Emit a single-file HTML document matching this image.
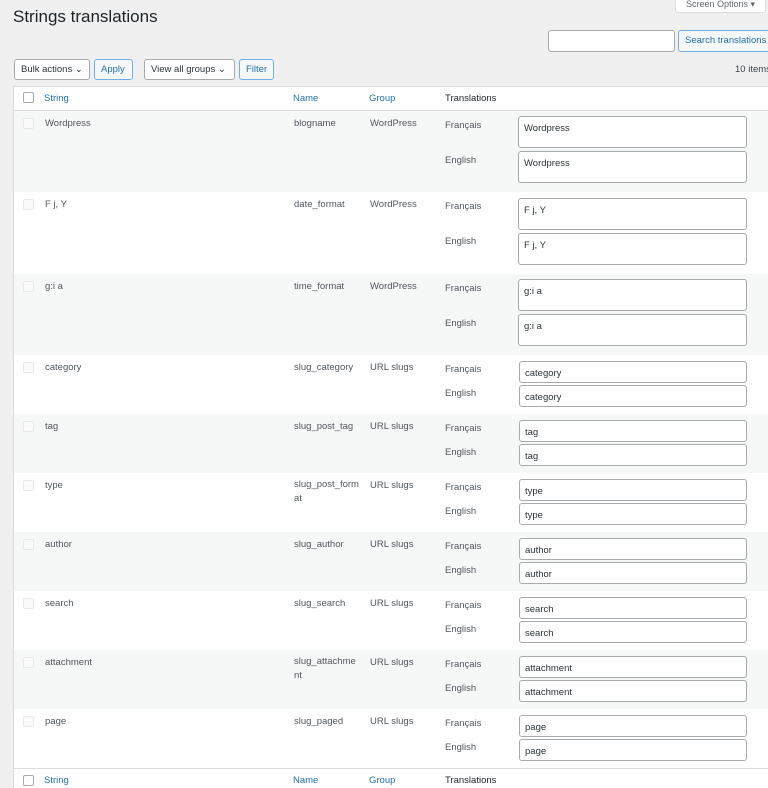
<!DOCTYPE html>
<html><head><meta charset="utf-8"><style>
*{box-sizing:border-box;margin:0;padding:0}
body{width:768px;height:780px;overflow:hidden;background:#f0f0f1;font-family:"Liberation Sans",sans-serif;color:#50575e;position:relative;font-size:9.5px}
.a{position:absolute}
.title{left:13px;top:7px;font-size:17px;color:#1d2327}
.btn{position:absolute;height:21px;border:1px solid #a7aaad;border-radius:3px;background:#fff;font-size:9.5px;line-height:19px;padding:0 6px;color:#2c3338}
.btnb{border-color:#72aee6;color:#2271b1;background:#f6f7f7}
.tbl{position:absolute;left:13px;top:86px;width:760px;height:700px;background:#fff;border:1px solid #dcdcde}
.row{position:absolute;left:13px;width:760px;border-left:1px solid #dcdcde}
.g{background:#f6f7f7}
.cb{position:absolute;left:9px;width:11px;height:11px;border:1px solid #e8e8ea;border-radius:2px;background:#fafafa}
.t{position:absolute;font-size:9.5px;color:#50575e;white-space:nowrap}
.ta{position:absolute;left:504px;width:229px;height:32px;border:1px solid #a7aaad;border-radius:3px;background:#fff;font-size:9.5px;padding:6px 5px;color:#2c3338}
.in{position:absolute;left:505px;width:228px;height:22px;border:1px solid #a7aaad;border-radius:3px;background:#fff;font-size:9.5px;padding:6px 5px 0;color:#2c3338}
.hd{color:#2271b1;font-size:9.5px}
</style></head><body>
<div class="a title">Strings translations</div>
<div class="btn" style="left:675px;top:-6px;height:19px;border-color:#dcdcde;color:#646970;padding:4px 10px 0;line-height:11px;font-size:9px">Screen Options ▾</div>
<div class="btn" style="left:548px;top:30px;width:127px;height:22px"></div>
<div class="btn btnb" style="left:678px;top:30px;height:22px;width:100px;line-height:20px">Search translations</div>
<div class="btn" style="left:14px;top:59px;width:76px">Bulk actions ⌄</div>
<div class="btn btnb" style="left:94px;top:59px;width:39px">Apply</div>
<div class="btn" style="left:144px;top:59px;width:91px">View all groups ⌄</div>
<div class="btn btnb" style="left:239px;top:59px;width:35px">Filter</div>
<div class="t" style="left:735px;top:64px;color:#3c434a">10 items</div>
<div class="tbl"></div>
<div class="row" style="top:86px;height:25px;border-bottom:1px solid #dcdcde">
<div class="cb" style="top:6px;border-color:#a7aaad;background:#fff"></div>
<div class="t hd" style="left:30px;top:7px">String</div>
<div class="t hd" style="left:279px;top:7px">Name</div>
<div class="t hd" style="left:355px;top:7px">Group</div>
<div class="t" style="left:431px;top:7px;font-size:9.5px;color:#1d2327">Translations</div>
</div>

<div class="row g" style="top:111px;height:81px"><div class="cb" style="top:7px"></div><div class="t" style="left:31px;top:7px">Wordpress</div><div class="t" style="left:280px;top:7px">blogname</div><div class="t" style="left:356px;top:7px">WordPress</div><div class="t" style="left:431px;top:9px">Français</div><div class="t" style="left:431px;top:44px">English</div><div class="ta" style="top:5px">Wordpress</div><div class="ta" style="top:40px">Wordpress</div></div>
<div class="row" style="top:192px;height:82px"><div class="cb" style="top:7px"></div><div class="t" style="left:31px;top:7px">F j, Y</div><div class="t" style="left:280px;top:7px">date_format</div><div class="t" style="left:356px;top:7px">WordPress</div><div class="t" style="left:431px;top:9px">Français</div><div class="t" style="left:431px;top:44px">English</div><div class="ta" style="top:6px">F j, Y</div><div class="ta" style="top:41px">F j, Y</div></div>
<div class="row g" style="top:274px;height:81px"><div class="cb" style="top:7px"></div><div class="t" style="left:31px;top:7px">g:i a</div><div class="t" style="left:280px;top:7px">time_format</div><div class="t" style="left:356px;top:7px">WordPress</div><div class="t" style="left:431px;top:9px">Français</div><div class="t" style="left:431px;top:44px">English</div><div class="ta" style="top:5px">g:i a</div><div class="ta" style="top:40px">g:i a</div></div>

<div class="row" style="top:355px;height:59px"><div class="cb" style="top:7px"></div><div class="t" style="left:31px;top:7px">category</div><div class="t" style="left:280px;top:7px">slug_category</div><div class="t" style="left:356px;top:7px">URL slugs</div><div class="t" style="left:431px;top:9px">Français</div><div class="t" style="left:431px;top:33px">English</div><div class="in" style="top:6px">category</div><div class="in" style="top:30px">category</div></div>
<div class="row g" style="top:414px;height:59px"><div class="cb" style="top:7px"></div><div class="t" style="left:31px;top:7px">tag</div><div class="t" style="left:280px;top:7px">slug_post_tag</div><div class="t" style="left:356px;top:7px">URL slugs</div><div class="t" style="left:431px;top:9px">Français</div><div class="t" style="left:431px;top:33px">English</div><div class="in" style="top:6px">tag</div><div class="in" style="top:30px">tag</div></div>
<div class="row" style="top:473px;height:59px"><div class="cb" style="top:7px"></div><div class="t" style="left:31px;top:7px">type</div><div class="t" style="left:280px;top:5px;line-height:14px">slug_post_form<br>at</div><div class="t" style="left:356px;top:7px">URL slugs</div><div class="t" style="left:431px;top:9px">Français</div><div class="t" style="left:431px;top:33px">English</div><div class="in" style="top:6px">type</div><div class="in" style="top:30px">type</div></div>
<div class="row g" style="top:532px;height:59px"><div class="cb" style="top:7px"></div><div class="t" style="left:31px;top:7px">author</div><div class="t" style="left:280px;top:7px">slug_author</div><div class="t" style="left:356px;top:7px">URL slugs</div><div class="t" style="left:431px;top:9px">Français</div><div class="t" style="left:431px;top:33px">English</div><div class="in" style="top:6px">author</div><div class="in" style="top:30px">author</div></div>
<div class="row" style="top:591px;height:59px"><div class="cb" style="top:7px"></div><div class="t" style="left:31px;top:7px">search</div><div class="t" style="left:280px;top:7px">slug_search</div><div class="t" style="left:356px;top:7px">URL slugs</div><div class="t" style="left:431px;top:9px">Français</div><div class="t" style="left:431px;top:33px">English</div><div class="in" style="top:6px">search</div><div class="in" style="top:30px">search</div></div>
<div class="row g" style="top:650px;height:59px"><div class="cb" style="top:7px"></div><div class="t" style="left:31px;top:7px">attachment</div><div class="t" style="left:280px;top:5px;line-height:14px">slug_attachme<br>nt</div><div class="t" style="left:356px;top:7px">URL slugs</div><div class="t" style="left:431px;top:9px">Français</div><div class="t" style="left:431px;top:33px">English</div><div class="in" style="top:6px">attachment</div><div class="in" style="top:30px">attachment</div></div>
<div class="row" style="top:709px;height:59px"><div class="cb" style="top:7px"></div><div class="t" style="left:31px;top:7px">page</div><div class="t" style="left:280px;top:7px">slug_paged</div><div class="t" style="left:356px;top:7px">URL slugs</div><div class="t" style="left:431px;top:9px">Français</div><div class="t" style="left:431px;top:33px">English</div><div class="in" style="top:6px">page</div><div class="in" style="top:30px">page</div></div>
<div class="row" style="top:768px;height:20px;border-top:1px solid #dcdcde;background:#fff">
<div class="cb" style="top:6px;border-color:#a7aaad;background:#fff"></div>
<div class="t hd" style="left:30px;top:6px">String</div>
<div class="t hd" style="left:279px;top:6px">Name</div>
<div class="t hd" style="left:355px;top:6px">Group</div>
<div class="t" style="left:431px;top:6px;font-size:9.5px;color:#1d2327">Translations</div>
</div>
</body></html>
